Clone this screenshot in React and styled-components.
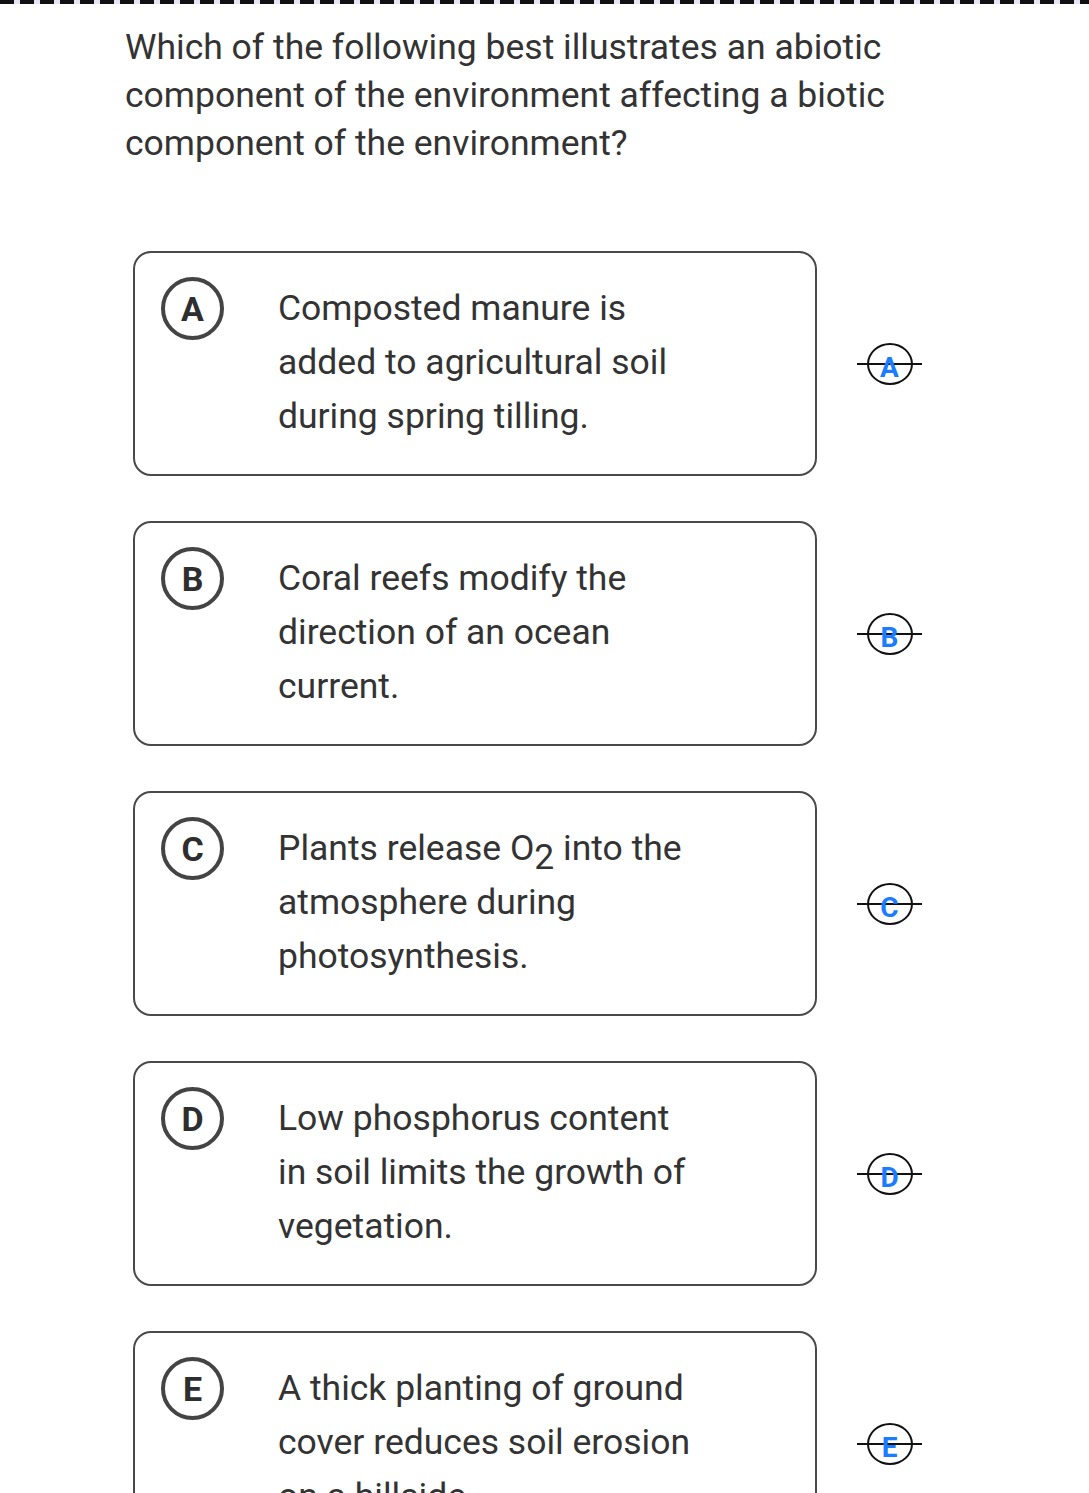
import styled, { createGlobalStyle } from "styled-components";

const GlobalStyle = createGlobalStyle`
  html, body {
    margin: 0;
    padding: 0;
    background: #fff;
  }
  body {
    font-family: Roboto, "Liberation Sans", sans-serif;
    color: #333;
  }
`;

const options = [
  { key: "A", lines: ["Composted manure is", "added to agricultural soil", "during spring tilling."] },
  { key: "B", lines: ["Coral reefs modify the", "direction of an ocean", "current."] },
  {
    key: "C",
    lines: [
      <>
        Plants release O<Sub>2</Sub> into the
      </>,
      "atmosphere during",
      "photosynthesis.",
    ],
  },
  { key: "D", lines: ["Low phosphorus content", "in soil limits the growth of", "vegetation."] },
  { key: "E", lines: ["A thick planting of ground", "cover reduces soil erosion", "on a hillside."] },
];

function Sub({ children }) {
  return <SubText>{children}</SubText>;
}

const App = () => (
  <Page>
    <GlobalStyle />
    <DashRule />
    <Question>
      Which of the following best illustrates an abiotic
      <br />
      component of the environment affecting a biotic
      <br />
      component of the environment?
    </Question>
    <OptionList>
      {options.map((opt) => (
        <OptionRow key={opt.key}>
          <Card>
            <Badge>{opt.key}</Badge>
            <OptionText>
              {opt.lines.map((line, i) => (
                <div key={i}>{line}</div>
              ))}
            </OptionText>
          </Card>
          <StruckMark>
            <MarkCircle>{opt.key}</MarkCircle>
          </StruckMark>
        </OptionRow>
      ))}
    </OptionList>
  </Page>
);

const Page = styled.div`
  width: 1089px;
  min-height: 1493px;
  overflow: hidden;
`;

const DashRule = styled.div`
  height: 4px;
  background: repeating-linear-gradient(
    to right,
    #111 0 14px,
    #e4e4f2 14px 20px
  );
`;

const Question = styled.div`
  padding: 19px 0 0 125px;
  font-size: 35.5px;
  line-height: 48px;
  color: #333;
  white-space: nowrap;
`;

const OptionList = styled.div`
  display: flex;
  flex-direction: column;
  gap: 45px;
  margin-top: 84px;
  padding-left: 133px;
`;

const OptionRow = styled.div`
  display: flex;
  align-items: center;
  gap: 40px;
`;

const Card = styled.div`
  box-sizing: border-box;
  width: 684px;
  height: 225px;
  flex-shrink: 0;
  border: 2px solid #4a4a4a;
  border-radius: 18px;
  display: flex;
  align-items: flex-start;
  padding: 28px 0 0 26px;
`;

const Badge = styled.div`
  box-sizing: border-box;
  width: 63px;
  height: 63px;
  margin-top: -4px;
  border: 4px solid #444;
  border-radius: 50%;
  display: flex;
  align-items: center;
  justify-content: center;
  font-size: 34px;
  font-weight: 700;
  color: #2e2e2e;
  flex-shrink: 0;
`;

const OptionText = styled.div`
  margin-left: 54px;
  font-size: 35.5px;
  line-height: 54px;
  color: #333;
  white-space: nowrap;
`;

const SubText = styled.span`
  font-size: 1em;
  position: relative;
  top: 9px;
`;

const StruckMark = styled.div`
  position: relative;
  width: 65px;
  height: 44px;
  display: flex;
  align-items: center;
  justify-content: center;

  &::before {
    content: "";
    position: absolute;
    left: 0;
    right: 0;
    top: 50%;
    height: 2px;
    margin-top: -1px;
    background: #111;
  }
`;

const MarkCircle = styled.div`
  box-sizing: border-box;
  width: 46px;
  height: 42px;
  border: 2px solid #111;
  border-radius: 50%;
  display: flex;
  align-items: center;
  justify-content: center;
  padding-top: 7px;
  font-size: 28px;
  font-weight: 700;
  color: #1a7cff;
  position: relative;
`;

export default App;
